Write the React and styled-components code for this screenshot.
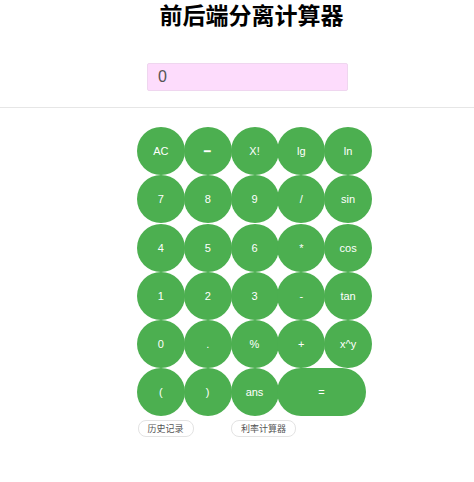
import React, { useState } from "react";
import styled, { createGlobalStyle } from "styled-components";

const GlobalStyle = createGlobalStyle`
  body {
    margin: 0;
    background: #ffffff;
    font-family: "Liberation Sans", "Noto Sans CJK SC", sans-serif;
  }
`;

const KEYS = [
  "AC", "━", "X!", "lg", "ln",
  "7", "8", "9", "/", "sin",
  "4", "5", "6", "*", "cos",
  "1", "2", "3", "-", "tan",
  "0", ".", "%", "+", "x^y",
  "(", ")", "ans",
];

const App = () => {
  const [display] = useState("0");
  return (
    <Page>
      <GlobalStyle />
      <Header>
        <Title>前后端分离计算器</Title>
        <Display readOnly value={display} />
      </Header>
      <Divider />
      <Body>
        <Keypad>
          {KEYS.map((k) => (
            <Key key={k}>{k}</Key>
          ))}
          <Key wide>=</Key>
        </Keypad>
        <Links>
          <LinkButton>历史记录</LinkButton>
          <LinkButton>利率计算器</LinkButton>
        </Links>
      </Body>
    </Page>
  );
};

export default App;

const Page = styled.div`
  display: flex;
  flex-direction: column;
  width: 474px;
  height: 482px;
`;

const Header = styled.div`
  display: flex;
  flex-direction: column;
  align-items: center;
`;

const Title = styled.h1`
  margin: 0 0 0 29px;
  font-family: "Liberation Sans", "Noto Sans CJK SC", sans-serif;
  font-size: 23px;
  line-height: 32px;
  font-weight: 700;
  color: #000;
`;

const Display = styled.input`
  box-sizing: border-box;
  width: 201px;
  height: 28px;
  margin: 31px 0 0 21px;
  padding: 0 10px;
  border: 1px solid #efd6ef;
  border-radius: 2px;
  background: #fddcfc;
  font-family: "Liberation Sans", sans-serif;
  font-size: 16px;
  color: #555;
  outline: none;
`;

const Divider = styled.div`
  height: 1px;
  margin-top: 16px;
  background: #e6e6e6;
`;

const Body = styled.div`
  display: flex;
  flex-direction: column;
  align-items: center;
  padding-top: 19px;
`;

const Keypad = styled.div`
  display: grid;
  grid-template-columns: repeat(5, 46.8px);
  grid-auto-rows: 48.3px;
  margin-left: 35px;
`;

const Key = styled.button`
  justify-self: ${(p) => (p.wide ? "start" : "center")};
  grid-column: ${(p) => (p.wide ? "span 2" : "auto")};
  width: ${(p) => (p.wide ? "89px" : "48px")};
  height: 48px;
  margin-left: ${(p) => (p.wide ? "-1px" : "0")};
  padding: 0;
  border: none;
  border-radius: 24px;
  background: #4caf50;
  color: #fff;
  font-family: "Liberation Sans", sans-serif;
  font-size: 11px;
  cursor: pointer;
`;

const Links = styled.div`
  display: grid;
  grid-template-columns: repeat(2, 93.6px) 46.8px;
  width: 234px;
  margin: 3px 0 0 35px;
`;

const LinkButton = styled.button`
  justify-self: start;
  height: 17px;
  padding: 0 9px;
  border: 1px solid #e3e3e3;
  border-radius: 8px;
  background: #fff;
  color: #555;
  font-family: "Noto Sans CJK SC", sans-serif;
  font-size: 9px;
  line-height: 15px;
`;
